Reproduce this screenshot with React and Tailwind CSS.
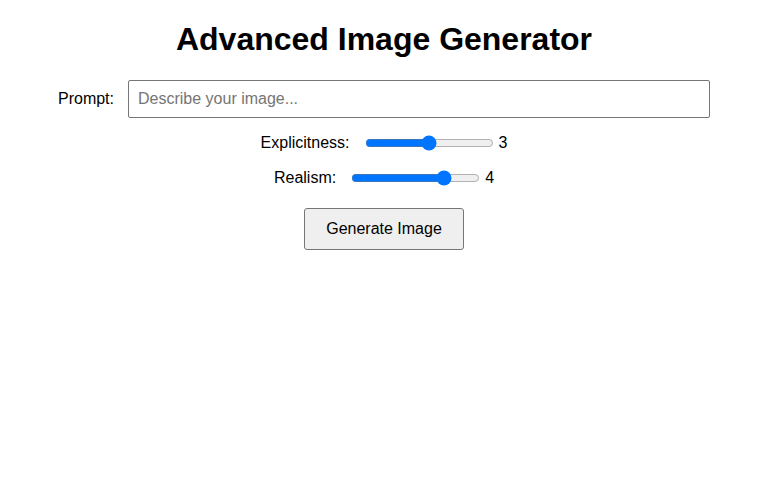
import React, { useState } from 'react';

export default function App() {
  const [prompt, setPrompt] = useState('');
  const [explicitness, setExplicitness] = useState(3);
  const [realism, setRealism] = useState(4);

  return (
    <div className="min-h-screen bg-white text-black font-['Liberation_Sans',Arial,sans-serif] flex flex-col items-center">
      <h1 className="text-[32px] leading-[37px] font-bold mt-[21px] mb-[22px]">Advanced Image Generator</h1>

      {/* Prompt */}
      <div className="flex items-center">
        <label className="text-base mr-[14px]">Prompt:</label>
        <input
          type="text"
          value={prompt}
          onChange={(e) => setPrompt(e.target.value)}
          placeholder="Describe your image..."
          className="w-[582px] h-[38px] px-[9px] text-base border border-[#767676] rounded-[2px] placeholder:text-[#757575] outline-none"
        />
      </div>

      {/* Sliders */}
      <div className="flex items-center mt-[15px] h-5">
        <label className="text-base mr-[13px]">Explicitness:</label>
        <input
          type="range"
          min="1"
          max="5"
          value={explicitness}
          onChange={(e) => setExplicitness(Number(e.target.value))}
          className="w-[129px] h-4 m-[2px]"
        />
        <span className="text-base ml-[3px]">{explicitness}</span>
      </div>
      <div className="flex items-center mt-[15px] h-5">
        <label className="text-base mr-[13px]">Realism:</label>
        <input
          type="range"
          min="1"
          max="5"
          value={realism}
          onChange={(e) => setRealism(Number(e.target.value))}
          className="w-[129px] h-4 m-[2px]"
        />
        <span className="text-base ml-[3px]">{realism}</span>
      </div>

      <button className="mt-[20px] px-[21px] py-[11px] text-base leading-[18px] bg-[#efefef] border border-[#767676] rounded-[3px]">
        Generate Image
      </button>
    </div>
  );
}
